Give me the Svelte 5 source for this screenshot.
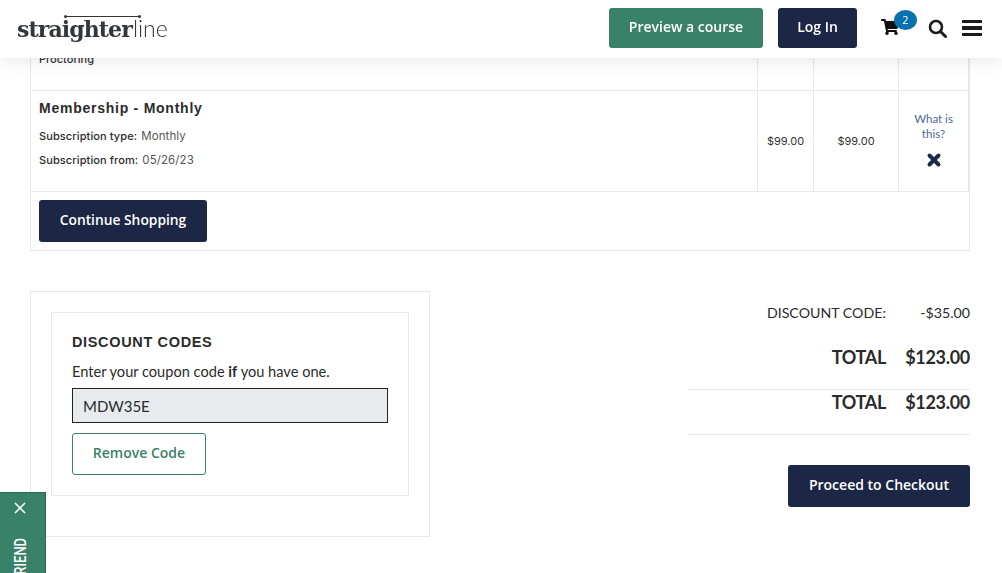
<script>
	const subscription = [
		{ label: 'Subscription type:', value: 'Monthly' },
		{ label: 'Subscription from:', value: '05/26/23' }
	];
</script>

<header class="topbar">
	<a class="logo" href="#home">
		<span class="logo-bar"></span>
		<span class="logo-bold">straighter</span><span class="logo-thin">line</span>
	</a>
	<nav class="actions">
		<button class="btn green">Preview a course</button>
		<button class="btn navy login">Log In</button>
		<span class="cart">
			<svg width="18" height="16" viewBox="0 0 576 512" aria-hidden="true">
				<path fill="#111" d="M528 301l47-208c3-15-8-29-23-29H159l-9-45C148 8 138 0 127 0H24C11 0 0 11 0 24v16c0 13 11 24 24 24h70l70 343c-17 10-28 28-28 49 0 31 25 56 56 56s56-25 56-56c0-16-6-30-17-40h210c-11 10-17 24-17 40 0 31 25 56 56 56s56-25 56-56c0-22-13-41-32-50l5-24c3-15-8-29-23-29H218l-7-32h293c11 0 21-8 24-19z"/>
			</svg>
			<span class="badge">2</span>
		</span>
		<svg class="search" width="19" height="19" viewBox="0 0 19 19" aria-hidden="true">
			<circle cx="8" cy="8" r="6" fill="none" stroke="#1c1c1c" stroke-width="2.6"/>
			<path d="M12.5 12.5l5 5" stroke="#1c1c1c" stroke-width="3" stroke-linecap="round"/>
		</svg>
		<span class="burger"><i></i><i></i><i></i></span>
	</nav>
</header>

<main class="page">
	<section class="cart-table">
		<div class="row first">
			<div class="cell name"><span class="proctoring">Proctoring</span></div>
			<div class="cell"></div>
			<div class="cell"></div>
			<div class="cell"></div>
		</div>
		<div class="row second">
			<div class="cell name">
				<h3>Membership - Monthly</h3>
				{#each subscription as item}
					<p class="meta"><span>{item.label}</span> <em>{item.value}</em></p>
				{/each}
			</div>
			<div class="cell price">$99.00</div>
			<div class="cell price">$99.00</div>
			<div class="cell remove">
				<a href="#what">What is<br />this?</a>
				<svg width="16" height="16" viewBox="0 0 16 16" aria-hidden="true">
					<path d="M3.5 3.5l9 9M12.5 3.5l-9 9" stroke="#1b2a4a" stroke-width="4" stroke-linecap="round"/>
				</svg>
			</div>
		</div>
		<div class="table-foot">
			<button class="btn navy large continue">Continue Shopping</button>
		</div>
	</section>

	<section class="lower">
		<div class="discount-outer">
			<div class="discount-inner">
				<h4>DISCOUNT CODES</h4>
				<p>Enter your coupon code <b>if</b> you have one.</p>
				<input class="code" value="MDW35E" readonly />
				<button class="btn outline">Remove Code</button>
			</div>
		</div>
		<div class="summary">
			<div class="line small"><span>DISCOUNT CODE:</span><span class="amount">-$35.00</span></div>
			<div class="line total"><span>TOTAL</span><span class="amount">$123.00</span></div>
			<div class="line total second-total"><span>TOTAL</span><span class="amount">$123.00</span></div>
			<button class="btn navy large checkout">Proceed to Checkout</button>
		</div>
	</section>
</main>

<aside class="refer">
	<svg width="12" height="12" viewBox="0 0 12 12" aria-hidden="true">
		<path d="M1 1l10 10M11 1L1 11" stroke="#fff" stroke-width="1.6"/>
	</svg>
	<span class="refer-squeeze"><span class="refer-text">REFER A FRIEND</span></span>
</aside>

<style>
	:global(body) {
		margin: 0;
		background: #fff;
		overflow: hidden;
	}

	.topbar {
		position: fixed;
		top: 0;
		left: 0;
		right: 0;
		height: 58px;
		box-sizing: border-box;
		z-index: 2;
		background: #fff;
		box-shadow: 0 2px 20px rgba(0, 0, 0, 0.1);
		display: flex;
		align-items: center;
		justify-content: space-between;
		padding: 0 20px 2px 17px;
	}

	.logo {
		position: relative;
		display: block;
		color: #33373b;
		text-decoration: none;
		line-height: 1;
		margin-top: 0;
		white-space: nowrap;
	}

	.logo-bar {
		position: absolute;
		left: 48px;
		top: 2px;
		width: 75px;
		height: 1px;
		background: #33373b;
	}

	.logo-bar::before,
	.logo-bar::after {
		content: '';
		position: absolute;
		top: -1px;
		width: 3px;
		height: 3px;
		border-radius: 50%;
		background: #33373b;
	}

	.logo-bar::before {
		left: -1px;
	}

	.logo-bar::after {
		right: -1px;
	}

	.logo-bold {
		font: 700 22px "DejaVu Serif", serif;
		letter-spacing: -0.9px;
	}

	.logo-thin {
		font: 300 23px Lato, sans-serif;
		margin-left: 1px;
	}

	.actions {
		display: flex;
		align-items: center;
	}

	.btn {
		border: 0;
		border-radius: 3px;
		color: #fff;
		font: 600 14px "Open Sans", sans-serif;
		padding: 0 0 3px;
		cursor: pointer;
	}

	.green {
		width: 154px;
		height: 40px;
		background: #3a8169;
	}

	.navy {
		background: #1b2744;
	}

	.login {
		width: 79px;
		height: 40px;
		margin-left: 15px;
	}

	.large {
		height: 42px;
	}

	.continue {
		font-size: 13.8px;
	}

	.cart {
		position: relative;
		display: block;
		width: 20px;
		height: 18px;
		margin-left: 24px;
	}

	.badge {
		position: absolute;
		left: 13px;
		top: -9px;
		width: 23px;
		height: 20px;
		border-radius: 50%;
		background: #0a71b0;
		color: #fff;
		font: 400 11px/20px "Open Sans", sans-serif;
		text-align: center;
	}

	.search {
		margin-left: 27px;
	}

	.burger {
		display: flex;
		flex-direction: column;
		gap: 3px;
		width: 20px;
		margin-left: 15px;
	}

	.burger i {
		display: block;
		height: 3.5px;
		background: #1c1c1c;
	}

	.page {
		padding: 0 32px 0 30px;
		font-family: Lato, sans-serif;
		color: #2b2b2b;
	}

	.cart-table {
		border: 1px solid #e8e8e8;
		border-top: 0;
		height: 251px;
		box-sizing: border-box;
	}

	.row {
		display: grid;
		grid-template-columns: 727px 56px 85px 70px;
		border-bottom: 1px solid #e8e8e8;
	}

	.first {
		height: 90px;
	}

	.second {
		height: 100px;
	}

	.cell {
		border-right: 1px solid #e8e8e8;
		box-sizing: border-box;
	}

	.name {
		padding-left: 8px;
	}

	.proctoring {
		display: block;
		margin-top: 52px;
		font: 500 11px "Inter", sans-serif;
		color: #333;
	}

	h3 {
		margin: 9px 0 12px;
		font: 700 14px/17px "Liberation Sans", sans-serif;
		letter-spacing: 0.75px;
		color: #2b2b2b;
	}

	.meta {
		margin: 0 0 10px;
		font: 500 11px/14px "Inter", sans-serif;
		letter-spacing: 0.1px;
		color: #2b2b2b;
	}

	.meta em {
		font-style: normal;
		font-weight: 400;
		font-size: 11.5px;
		color: #555;
		margin-left: 1px;
	}

	.price {
		display: flex;
		align-items: center;
		justify-content: center;
		font: 400 11px "Inter", sans-serif;
		color: #333;
	}

	.remove {
		text-align: center;
		padding-top: 20px;
	}

	.remove a {
		display: block;
		margin-bottom: 11px;
		color: #4a6a96;
		font: 400 11.5px/15px Lato, sans-serif;
		text-decoration: none;
	}

	.remove svg {
		display: block;
		margin: 0 auto;
	}

	.table-foot {
		padding: 8px;
	}

	.table-foot .btn {
		width: 168px;
		display: block;
	}

	.lower {
		display: flex;
		justify-content: space-between;
		margin-top: 40px;
	}

	.discount-outer {
		width: 400px;
		height: 246px;
		box-sizing: border-box;
		border: 1px solid #e8e8e8;
		padding: 20px;
	}

	.discount-inner {
		height: 184px;
		box-sizing: border-box;
		border: 1px solid #e8e8e8;
		padding: 20px;
	}

	h4 {
		margin: 1px 0 11px;
		font: 700 14.5px/17px "Liberation Sans", sans-serif;
		letter-spacing: 0.65px;
		color: #2b2b2b;
	}

	.discount-inner p {
		margin: 0 0 6px;
		font-size: 14.6px;
		line-height: 20px;
	}

	.code {
		display: block;
		width: 316px;
		height: 35px;
		box-sizing: border-box;
		border: 1px solid #222;
		padding: 0 10px;
		background: #e8ebee;
		color: #2b2b2b;
		font: 400 15px Lato, sans-serif;
		outline: 0;
	}

	.outline {
		display: block;
		width: 134px;
		height: 42px;
		margin-top: 10px;
		background: #fff;
		border: 1px solid #3a8169;
		color: #3a8169;
	}

	.summary {
		width: 282px;
		display: flex;
		flex-direction: column;
	}

	.line {
		display: flex;
		justify-content: flex-end;
	}

	.line .amount {
		width: 84px;
		text-align: right;
	}

	.small {
		height: 43px;
		align-items: center;
		font-size: 14.2px;
	}

	.total {
		height: 56px;
		padding-top: 1px;
		box-sizing: border-box;
		border-bottom: 1px solid #e8e8e8;
		font-size: 18px;
		letter-spacing: -0.3px;
		font-weight: 700;
		line-height: 44px;
	}

	.second-total {
		height: 45px;
		padding-top: 0;
		line-height: 24px;
	}

	.checkout {
		width: 182px;
		margin-top: 30px;
		align-self: flex-end;
	}

	.refer {
		position: fixed;
		left: 0;
		top: 492px;
		width: 46px;
		height: 81px;
		box-sizing: border-box;
		overflow: hidden;
		background: #3a8169;
		border: 1px solid #2e6b56;
		border-bottom: 0;
		border-left: 0;
		color: #fff;
	}

	.refer svg {
		position: absolute;
		left: 14px;
		top: 9px;
	}

	.refer-squeeze {
		position: absolute;
		left: 10px;
		top: 45px;
		transform: scaleY(0.76);
		transform-origin: 50% 0;
	}

	.refer-text {
		display: block;
		writing-mode: vertical-rl;
		transform: rotate(180deg);
		font: 500 17px/20px Roboto, sans-serif;
		white-space: nowrap;
	}
</style>
